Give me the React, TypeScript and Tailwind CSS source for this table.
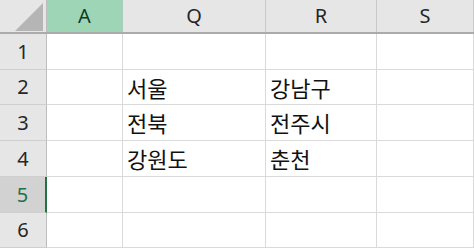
import React from "react";

const cols = [
  { key: "A", w: "w-[76px]" },
  { key: "Q", w: "w-[143px]" },
  { key: "R", w: "w-[111px]" },
  { key: "S", w: "w-[97px]" },
];

const rows: { n: number; h: string; cells: string[] }[] = [
  { n: 1, h: "h-[36px]", cells: ["", "", "", ""] },
  { n: 2, h: "h-[35px]", cells: ["", "서울", "강남구", ""] },
  { n: 3, h: "h-[36px]", cells: ["", "전북", "전주시", ""] },
  { n: 4, h: "h-[36px]", cells: ["", "강원도", "춘천", ""] },
  { n: 5, h: "h-[36px]", cells: ["", "", "", ""] },
  { n: 6, h: "h-[35px]", cells: ["", "", "", ""] },
];

export default function App() {
  return (
    <div
      className="w-[474px] h-[248px] overflow-hidden bg-white flex flex-col"
      style={{ fontFamily: '"Noto Sans", "Noto Sans CJK KR", sans-serif' }}
    >
      <div className="flex h-[34px] shrink-0 bg-[#e6e6e6] border-b-2 border-[#ababab]">
        <div className="w-[47px] shrink-0 relative border-r border-[#bdbdbd]">
          <svg className="absolute left-0 top-0" width="46" height="32" viewBox="0 0 46 32">
            <polygon points="15,31 43,31 43,3" fill="#b5b5b5" />
          </svg>
        </div>
        {cols.map((c, i) => (
          <div
            key={c.key}
            className={`${c.w} shrink-0 flex items-center justify-center text-[20px] border-r ${
              i === 0 ? "bg-[#9fd5b7] text-[#0b3d22] border-[#a8cdb8]" : "text-[#262626] border-[#c9c9c9]"
            }`}
          >
            {c.key}
          </div>
        ))}
      </div>
      {rows.map((r) => (
        <div key={r.n} className={`flex ${r.h} shrink-0`}>
          <div
            className={`w-[47px] shrink-0 flex items-center justify-center text-[20px] border-b border-[#cfcfcf] ${
              r.n === 5
                ? "bg-[#d2d2d2] text-[#217346] border-r-2 border-r-[#217346]"
                : "bg-[#e6e6e6] text-[#262626] border-r border-r-[#bdbdbd]"
            }`}
          >
            {r.n}
          </div>
          {cols.map((c, i) => (
            <div
              key={c.key}
              className={`${c.w} shrink-0 flex items-center pl-[4px] text-[22px] text-[#111111] border-r border-b border-[#dadada]`}
              style={{ fontFamily: '"Noto Sans CJK KR", sans-serif' }}
            >
              {r.cells[i]}
            </div>
          ))}
        </div>
      ))}
    </div>
  );
}
